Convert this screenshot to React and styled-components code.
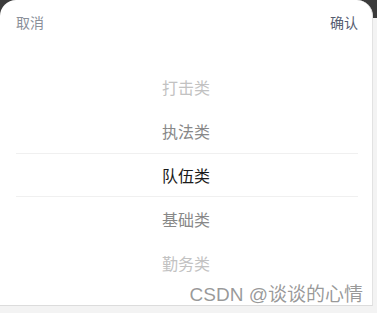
import styled, { createGlobalStyle } from "styled-components";

const GlobalStyle = createGlobalStyle`
    html, body { margin: 0; padding: 0; }
    body {
        width: 377px;
        height: 313px;
        overflow: hidden;
        font-family: "Noto Sans CJK SC", "Liberation Sans", sans-serif;
        background: linear-gradient(#3b3b3b 0 18px, #f3f3f3 18px);
    }
`

const Stage = styled.div`
    position: relative;
    width: 377px;
    height: 313px;
`

const Sheet = styled.div`
    width: 373px;
    height: 306px;
    background: #fff;
    border-radius: 16px 16px 0 0;
    border-right: 1px solid #e2e2e2;
    border-bottom: 1px solid #dcdcdc;
    box-sizing: border-box;
    overflow: hidden;
`

const Toolbar = styled.div`
    display: flex;
    justify-content: space-between;
    align-items: center;
    height: 44px;
    padding: 0 14px 0 16px;
    font-size: 14px;
`

const ToolButton = styled.span`
    color: ${(p) => (p.$confirm ? "#555d70" : "#8a8f99")};
`

const Picker = styled.div`
    position: relative;
    padding-top: 21px;
`

const Option = styled.div`
    display: flex;
    align-items: center;
    justify-content: center;
    height: 44px;
    font-size: 16px;
    color: ${(p) => p.$tone};
`

const Indicator = styled.div`
    position: absolute;
    left: 16px;
    right: 14px;
    top: 109px;
    height: 42px;
    border-top: 1px solid #f0f0f0;
    border-bottom: 1px solid #f0f0f0;
    pointer-events: none;
`

const Watermark = styled.div`
    position: absolute;
    right: 14px;
    bottom: 7px;
    font-family: "Liberation Sans", "Noto Sans CJK SC", sans-serif;
    font-size: 19px;
    color: rgba(120, 120, 120, 0.75);
    text-shadow: 0 0 1px #fff;
`

const options = [
    { label: "打击类", tone: "#c2c2c2" },
    { label: "执法类", tone: "#888" },
    { label: "队伍类", tone: "#1a1a1a" },
    { label: "基础类", tone: "#888" },
    { label: "勤务类", tone: "#c2c2c2" },
];

const App = () => {
    return (
        <Stage>
            <GlobalStyle />
            <Sheet>
                {/* toolbar */}
                <Toolbar>
                    <ToolButton>取消</ToolButton>
                    <ToolButton $confirm>确认</ToolButton>
                </Toolbar>

                {/* column */}
                <Picker>
                    <Indicator />
                    {options.map((o) => (
                        <Option key={o.label} $tone={o.tone}>{o.label}</Option>
                    ))}
                </Picker>
            </Sheet>
            <Watermark>CSDN @谈谈的心情</Watermark>
        </Stage>
    )
}

export default App;
